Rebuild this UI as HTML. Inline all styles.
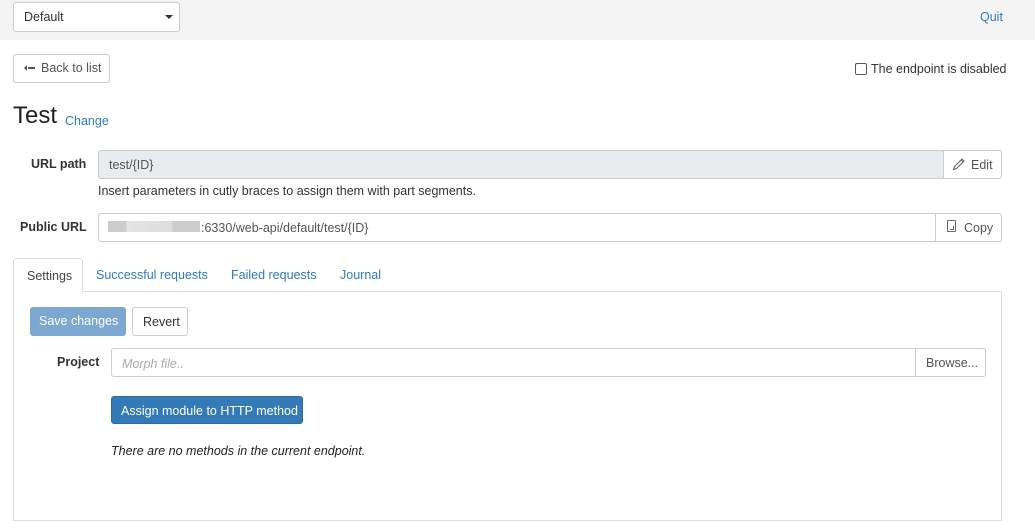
<!DOCTYPE html>
<html><head><style>
*{box-sizing:border-box}
body{margin:0;width:1035px;height:511px;overflow:hidden;background:#fff;font-family:"Liberation Sans",sans-serif;font-size:12.5px;color:#333;position:relative}
.a{position:absolute}
.top{left:0;top:0;width:1035px;height:40px;background:#f4f4f4}
.box{border:1px solid #ccc;border-radius:3px;background:#fff}
.blue{color:#337ab7}
</style></head><body>
<div class="a top"></div>
<div class="a box" style="left:13px;top:2px;width:167px;height:30px;padding:7px 10px">Default</div>
<div class="a" style="left:165px;top:15px;border:4px solid transparent;border-top-color:#333;border-bottom:0"></div>
<div class="a blue" style="left:980px;top:10px">Quit</div>
<div class="a box" style="left:13px;top:54px;width:97px;height:29px;padding:6px 0 0 27px;color:#555">Back to list</div>
<div class="a" style="left:28px;top:67px;width:7px;height:2px;background:#555"></div>
<div class="a" style="left:24px;top:64.5px;border:3.5px solid transparent;border-right-color:#555;border-left:0"></div>
<div class="a" style="left:855px;top:63px;width:12px;height:12px;border:1px solid #555;border-radius:2px"></div>
<div class="a" style="left:871px;top:62px">The endpoint is disabled</div>
<div class="a" style="left:13px;top:102px;font-size:24px;color:#222">Test</div>
<div class="a blue" style="left:65px;top:114px">Change</div>
<div class="a" style="left:31px;top:157px;font-weight:bold">URL path</div>
<div class="a" style="left:98px;top:150px;width:904px;height:29px;border:1px solid #ccc;border-radius:3px;background:#e9ecef;padding:7px 10px;color:#555">test/{ID}</div>
<div class="a" style="left:943px;top:150px;width:59px;height:29px;border:1px solid #ccc;border-radius:0 3px 3px 0;background:#fff;padding:7px 0 0 27px;color:#555">Edit</div>
<svg class="a" style="left:952px;top:157px" width="14" height="14" viewBox="0 0 14 14"><path d="M1.5 12.5 L2.5 9.5 L10 2 L12 4 L4.5 11.5 Z M9 3 L11 5" fill="none" stroke="#666" stroke-width="1.1"/></svg>
<div class="a" style="left:98px;top:184px">Insert parameters in cutly braces to assign them with part segments.</div>
<div class="a" style="left:20px;top:220px;font-weight:bold">Public URL</div>
<div class="a" style="left:98px;top:213px;width:904px;height:29px;border:1px solid #ccc;border-radius:3px;padding:7px 0 0 102px;color:#555">:6330/web-api/default/test/{ID}</div>
<div class="a" style="left:108px;top:221px;width:92px;height:11px;background:linear-gradient(90deg,#ccc 0,#ccc 20%,#e4e4e4 20%,#ddd 70%,#ccc 70%)"></div>
<div class="a" style="left:935px;top:213px;width:67px;height:29px;border:1px solid #ccc;border-radius:0 3px 3px 0;background:#fff;padding:7px 0 0 28px;color:#555">Copy</div>
<div class="a" style="left:947px;top:220px;width:9px;height:12px;border:1.5px solid #666;border-radius:1px"></div>
<div class="a" style="left:950px;top:226px;width:4px;height:4px;border-bottom:1.5px solid #666;border-right:1px solid #666"></div>
<div class="a" style="left:13px;top:291px;width:989px;height:230px;border:1px solid #ddd"></div>
<div class="a" style="left:13px;top:258px;width:70px;height:34px;border:1px solid #ddd;border-bottom:1px solid #fff;border-radius:3px 3px 0 0;background:#fff;padding:10px 0 0 13px;color:#444">Settings</div>
<div class="a blue" style="left:96px;top:268px">Successful requests</div>
<div class="a blue" style="left:231px;top:268px">Failed requests</div>
<div class="a blue" style="left:340px;top:268px">Journal</div>
<div class="a" style="left:30px;top:307px;width:96px;height:29px;background:#7ba7d1;border-radius:3px;color:#fff;padding:7px 0 0 9px">Save changes</div>
<div class="a box" style="left:132px;top:307px;width:56px;height:29px;padding:7px 0 0 10px">Revert</div>
<div class="a" style="left:57px;top:355px;font-weight:bold">Project</div>
<div class="a box" style="left:111px;top:348px;width:875px;height:29px;padding:8px 10px;color:#aaa;font-style:italic">Morph file..</div>
<div class="a" style="left:915px;top:348px;width:71px;height:29px;border:1px solid #ccc;border-radius:0 3px 3px 0;background:#fff;padding:7px 0 0 10px;color:#555">Browse...</div>
<div class="a" style="left:111px;top:396px;width:192px;height:28px;background:#337ab7;border:1px solid #2e6da4;border-radius:3px;color:#fff;padding:7px 0 0 9px">Assign module to HTTP method</div>
<div class="a" style="left:111px;top:444px;font-style:italic;color:#222">There are no methods in the current endpoint.</div>
</body></html>
